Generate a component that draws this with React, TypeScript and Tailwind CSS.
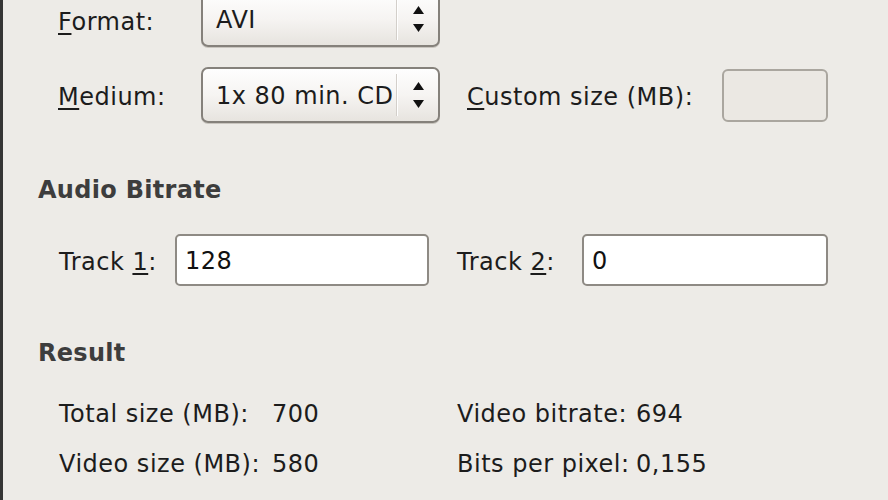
import React from 'react';

function Mn({ children }: { children: React.ReactNode }) {
  return <span className="underline underline-offset-[3px] decoration-[2px]">{children}</span>;
}

function Combo({ value }: { value: string }) {
  return (
    <div className="flex h-[56px] w-[239px] items-center rounded-[7px] border-2 border-[#85817b] bg-gradient-to-b from-[#fefefe] via-[#f6f4f2] to-[#e7e4df] shadow-[0_1px_0_#c9c5bf]">
      <span className="flex-1 pl-[13px] pt-[2px] text-[#1c1c1c]">{value}</span>
      <div className="h-[42px] w-[2px] bg-[#d3cfca] border-r border-white" />
      <div className="flex w-[40px] justify-center">
        <svg width="13" height="28" viewBox="0 0 13 28">
          <path d="M6.5 1 L12 9 L1 9 Z" fill="#111" />
          <path d="M1 19 L12 19 L6.5 27 Z" fill="#111" />
        </svg>
      </div>
    </div>
  );
}

function Entry({ value, width }: { value: string; width: string }) {
  return (
    <div className={`flex h-[52px] ${width} items-center rounded-[5px] border-2 border-[#8e8a84] bg-white pl-[8px] pt-[2px] text-[#111]`}>
      {value}
    </div>
  );
}

export default function App() {
  return (
    <div
      className="h-[500px] w-[888px] overflow-hidden border-l-[3px] border-[#353535] bg-[#edebe7] text-[24px] leading-[28px] tracking-[0.5px] text-[#1c1c1c]"
      style={{ fontFamily: '"DejaVu Sans", sans-serif' }}
    >
      <div className="-mt-[9px] flex flex-col">
        <div className="flex flex-col gap-[20px] pl-[55px]">
          <div className="flex items-center">
            <span className="w-[143px] pt-[5px]"><Mn>F</Mn>ormat:</span>
            <Combo value="AVI" />
          </div>
          <div className="flex items-center">
            <span className="w-[143px] pt-[4px]"><Mn>M</Mn>edium:</span>
            <Combo value="1x 80 min. CD" />
            <span className="ml-[27px] w-[255px] pt-[4px]"><Mn>C</Mn>ustom size (MB):</span>
            <div className="h-[53px] w-[106px] rounded-[6px] border-2 border-[#aaa69f] bg-[#ebe8e3]" />
          </div>
        </div>

        <div className="mt-[53px] pl-[35px] font-bold tracking-[0.3px] text-[#3d3d3d]">Audio Bitrate</div>

        <div className="mt-[30px] flex items-center pl-[56px]">
          <span className="w-[116px] pt-[4px]">Track <Mn>1</Mn>:</span>
          <Entry value="128" width="w-[254px]" />
          <span className="ml-[28px] w-[125px] pt-[4px]">Track <Mn>2</Mn>:</span>
          <Entry value="0" width="w-[246px]" />
        </div>

        <div className="mt-[53px] pl-[35px] font-bold tracking-[0.3px] text-[#3d3d3d]">Result</div>

        <div className="mt-[22px] grid grid-cols-[213px_185px_179px_auto] pl-[56px] [&>span]:h-[50px] [&>span]:leading-[50px]">
          <span>Total size (MB):</span>
          <span>700</span>
          <span>Video bitrate:</span>
          <span>694</span>
          <span>Video size (MB):</span>
          <span>580</span>
          <span>Bits per pixel:</span>
          <span>0,155</span>
          <span>Audio size (MB):</span>
          <span>120</span>
          <span></span>
          <span></span>
        </div>
      </div>
    </div>
  );
}
